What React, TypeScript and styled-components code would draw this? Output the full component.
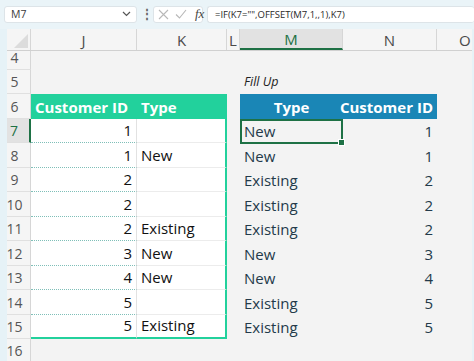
import React from "react";
import styled, { createGlobalStyle } from "styled-components";

const GlobalStyle = createGlobalStyle`
  html, body { margin: 0; padding: 0; background: #e6f2f7; }
  body { font-family: "Open Sans", "Liberation Sans", sans-serif; }
`;

const W = { J: 106, K: 90, L: 13, M: 103, N: 94, O: 60 };
const GREEN = "#22d19c";
const BLUE = "#1a86b6";
const SEL = "#1e7145";

const Frame = styled.div`
  width: 474px;
  height: 361px;
  overflow: hidden;
  background: #e6f2f7;
  display: flex;
  flex-direction: column;
`;

const FormulaBar = styled.div`
  height: 28px;
  flex: none;
  display: flex;
  align-items: center;
  padding: 0 0 1px 4px;
  gap: 4px;
  background: #eaf4f8;
`;

const Field = styled.div<{ $w?: number }>`
  height: 17px;
  ${(p) => (p.$w ? `width: ${p.$w}px; flex: none;` : "flex: 1;")}
  background: #ffffff;
  border: 1px solid #dde4e8;
  border-right-width: ${(p) => (p.$w ? 1 : 0)}px;
  border-radius: 3px;
  box-sizing: border-box;
  display: flex;
  align-items: center;
  font-size: 10px;
  color: #333;
`;

const NameText = styled.span`
  flex: 1;
  padding-left: 6px;
  font-size: 10.5px;
  color: #3a3a3a;
`;

const Chevron = styled.svg`
  margin-right: 5px;
`;

const Dots = styled.span`
  width: 8px;
  text-align: center;
  color: #666;
  font-size: 12px;
  font-weight: bold;
  line-height: 1;
`;

const FxIcons = styled.div`
  display: flex;
  align-items: center;
  gap: 6px;
  padding-left: 4px;
`;

const Fx = styled.span`
  font-family: "Liberation Serif", "DejaVu Serif", serif;
  font-style: italic;
  font-size: 13px;
  color: #444;
  margin-left: 2px;
`;

const FormulaText = styled.span`
  padding-left: 7px;
  font-size: 9.5px;
  color: #2a2a2a;
  white-space: nowrap;
`;

const Sheet = styled.div`
  margin-left: 7px;
  margin-right: 2px;
  flex: 1;
  background: #f3f3f3;
  display: flex;
  flex-direction: column;
  overflow: hidden;
`;

const HeaderRow = styled.div`
  height: 22px;
  flex: none;
  display: flex;
  background: #f5f5f5;
  border-bottom: 1px solid #d0d0d0;
  box-sizing: border-box;
`;

const Corner = styled.div`
  width: 24px;
  flex: none;
  position: relative;
  border-right: 1px solid #d6d6d6;
  box-sizing: border-box;
  &::after {
    content: "";
    position: absolute;
    right: 2px;
    bottom: 2px;
    width: 0;
    height: 0;
    border-left: 14px solid transparent;
    border-bottom: 14px solid #dcdcdc;
  }
`;

const ColHead = styled.div<{ $w: number; $sel?: boolean; $pad?: number }>`
  width: ${(p) => p.$w}px;
  flex: none;
  box-sizing: border-box;
  display: flex;
  align-items: center;
  justify-content: ${(p) => (p.$pad ? "flex-start" : "center")};
  padding: 1px 0 0 ${(p) => p.$pad || 0}px;
  border-right: 1px solid #d6d6d6;
  font-size: 15px;
  color: ${(p) => (p.$sel ? SEL : "#4a4a4a")};
  background: ${(p) => (p.$sel ? "#e2e2e2" : "transparent")};
  border-bottom: ${(p) => (p.$sel ? `2px solid ${SEL}` : "0")};
`;

const Row = styled.div<{ $h: number }>`
  height: ${(p) => p.$h}px;
  flex: none;
  display: flex;
`;

const RowHead = styled.div<{ $sel?: boolean }>`
  width: 24px;
  flex: none;
  box-sizing: border-box;
  display: flex;
  align-items: flex-end;
  justify-content: center;
  padding: 0 8px 2px 0;
  font-size: 14px;
  color: ${(p) => (p.$sel ? SEL : "#555")};
  background: ${(p) => (p.$sel ? "#e2e2e2" : "#f5f5f5")};
  border-right: ${(p) => (p.$sel ? `2px solid ${SEL}` : "1px solid #d6d6d6")};
  border-bottom: 1px solid #e0e0e0;
`;

type Kind = "plain" | "green" | "white" | "blue";

const Cell = styled.div<{
  $w: number;
  $kind?: Kind;
  $align?: "left" | "right" | "center";
  $dotted?: boolean;
  $lastCol?: boolean;
  $lastRow?: boolean;
  $sep?: boolean;
}>`
  width: ${(p) => p.$w}px;
  flex: none;
  box-sizing: border-box;
  position: relative;
  display: flex;
  align-items: flex-end;
  padding: 0 4px 2px 4px;
  justify-content: ${(p) =>
    p.$align === "right" ? "flex-end" : p.$align === "center" ? "center" : "flex-start"};
  font-size: 15px;
  white-space: nowrap;
  color: ${(p) =>
    p.$kind === "green" || p.$kind === "blue" ? "#ffffff" : p.$kind === "white" ? "#111" : "#233a4a"};
  font-weight: ${(p) => (p.$kind === "green" || p.$kind === "blue" ? 700 : 400)};
  background: ${(p) =>
    p.$kind === "green" ? GREEN : p.$kind === "blue" ? BLUE : p.$kind === "white" ? "#ffffff" : "transparent"};
  border-bottom: ${(p) =>
    p.$lastRow
      ? `2px solid ${GREEN}`
      : p.$dotted
      ? "1px dotted #7fbfb8"
      : p.$kind === "white"
      ? "1px solid #ececec"
      : "0"};
  border-right: ${(p) =>
    p.$lastCol ? `2px solid ${GREEN}` : p.$sep ? "1px solid #e2e2e2" : "0"};
`;

const FillLabel = styled.span`
  font-style: italic;
  font-size: 12.5px;
  color: #222;
  margin-bottom: 2px;
`;

const Selection = styled.div`
  position: absolute;
  inset: 0 0 -1px 0;
  border: 2px solid ${SEL};
  pointer-events: none;
  &::after {
    content: "";
    position: absolute;
    right: -4px;
    bottom: -4px;
    width: 5px;
    height: 5px;
    background: ${SEL};
    border: 1px solid #fff;
  }
`;

const left: [number, string][] = [
  [1, ""],
  [1, "New"],
  [2, ""],
  [2, ""],
  [2, "Existing"],
  [3, "New"],
  [4, "New"],
  [5, ""],
  [5, "Existing"],
];

const right: [string, number][] = [
  ["New", 1],
  ["New", 1],
  ["Existing", 2],
  ["Existing", 2],
  ["Existing", 2],
  ["New", 3],
  ["New", 4],
  ["Existing", 5],
  ["Existing", 5],
];

const RH = 24.5;

export default function App() {
  return (
    <>
      <GlobalStyle />
      <Frame>
        <FormulaBar>
          <Field $w={133}>
            <NameText>M7</NameText>
            <Chevron width="9" height="6" viewBox="0 0 9 6">
              <path d="M1 1l3.5 3.5L8 1" stroke="#555" strokeWidth="1.2" fill="none" />
            </Chevron>
          </Field>
          <Dots>⋮</Dots>
          <Field $w={50}>
            <FxIcons>
              <svg width="11" height="11" viewBox="0 0 11 11">
                <path d="M1 1l9 9M10 1l-9 9" stroke="#b8b8b8" strokeWidth="1.1" fill="none" />
              </svg>
              <svg width="12" height="10" viewBox="0 0 12 10">
                <path d="M1 5.5l3.5 3.5L11 1" stroke="#b8b8b8" strokeWidth="1.1" fill="none" />
              </svg>
              <Fx>fx</Fx>
            </FxIcons>
          </Field>
          <Field>
            <FormulaText>=IF(K7="",OFFSET(M7,1,,1),K7)</FormulaText>
          </Field>
        </FormulaBar>
        <Sheet>
          <HeaderRow>
            <Corner />
            <ColHead $w={W.J}>J</ColHead>
            <ColHead $w={W.K}>K</ColHead>
            <ColHead $w={W.L}>L</ColHead>
            <ColHead $w={W.M} $sel>
              M
            </ColHead>
            <ColHead $w={W.N}>N</ColHead>
            <ColHead $w={W.O} $pad={22}>
              O
            </ColHead>
          </HeaderRow>
          <Row $h={19}>
            <RowHead>4</RowHead>
          </Row>
          <Row $h={24}>
            <RowHead>5</RowHead>
            <Cell $w={W.J} />
            <Cell $w={W.K} />
            <Cell $w={W.L} />
            <Cell $w={W.M}>
              <FillLabel>Fill Up</FillLabel>
            </Cell>
          </Row>
          <Row $h={RH}>
            <RowHead>6</RowHead>
            <Cell $w={W.J} $kind="green">
              Customer ID
            </Cell>
            <Cell $w={W.K} $kind="green">
              Type
            </Cell>
            <Cell $w={W.L} />
            <Cell $w={W.M} $kind="blue" $align="center">
              Type
            </Cell>
            <Cell $w={W.N} $kind="blue" $align="right">
              Customer ID
            </Cell>
          </Row>
          {left.map(([id, type], i) => {
            const last = i === left.length - 1;
            const [rt, rn] = right[i];
            return (
              <Row $h={RH} key={i}>
                <RowHead $sel={i === 0}>{i + 7}</RowHead>
                <Cell $w={W.J} $kind="white" $align="right" $dotted={!last} $lastRow={last} $sep>
                  {id}
                </Cell>
                <Cell $w={W.K} $kind="white" $lastCol $lastRow={last}>
                  {type}
                </Cell>
                <Cell $w={W.L} />
                <Cell $w={W.M}>
                  {rt}
                  {i === 0 && <Selection />}
                </Cell>
                <Cell $w={W.N} $align="right">
                  {rn}
                </Cell>
              </Row>
            );
          })}
          <Row $h={24}>
            <RowHead>16</RowHead>
          </Row>
        </Sheet>
      </Frame>
    </>
  );
}
